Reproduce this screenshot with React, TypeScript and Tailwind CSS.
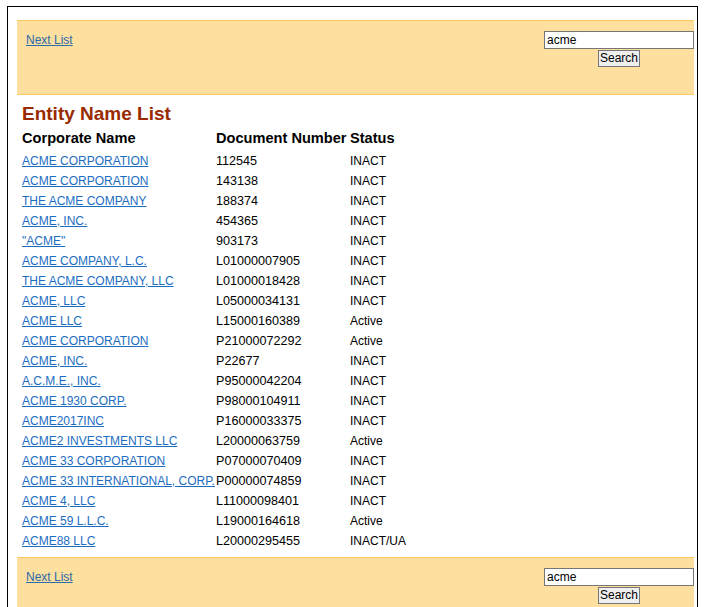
const entities = [
  { name: "ACME CORPORATION", doc: "112545", status: "INACT" },
  { name: "ACME CORPORATION", doc: "143138", status: "INACT" },
  { name: "THE ACME COMPANY", doc: "188374", status: "INACT" },
  { name: "ACME, INC.", doc: "454365", status: "INACT" },
  { name: '"ACME"', doc: "903173", status: "INACT" },
  { name: "ACME COMPANY, L.C.", doc: "L01000007905", status: "INACT" },
  { name: "THE ACME COMPANY, LLC", doc: "L01000018428", status: "INACT" },
  { name: "ACME, LLC", doc: "L05000034131", status: "INACT" },
  { name: "ACME LLC", doc: "L15000160389", status: "Active" },
  { name: "ACME CORPORATION", doc: "P21000072292", status: "Active" },
  { name: "ACME, INC.", doc: "P22677", status: "INACT" },
  { name: "A.C.M.E., INC.", doc: "P95000042204", status: "INACT" },
  { name: "ACME 1930 CORP.", doc: "P98000104911", status: "INACT" },
  { name: "ACME2017INC", doc: "P16000033375", status: "INACT" },
  { name: "ACME2 INVESTMENTS LLC", doc: "L20000063759", status: "Active" },
  { name: "ACME 33 CORPORATION", doc: "P07000070409", status: "INACT" },
  { name: "ACME 33 INTERNATIONAL, CORP.", doc: "P00000074859", status: "INACT" },
  { name: "ACME 4, LLC", doc: "L11000098401", status: "INACT" },
  { name: "ACME 59 L.L.C.", doc: "L19000164618", status: "Active" },
  { name: "ACME88 LLC", doc: "L20000295455", status: "INACT/UA" },
];

function Navigation() {
  return (
    <div className="ml-[9px] mr-[3px] flex h-[75px] justify-between border-y border-[#fcc862] bg-[#fddfa0] pt-[10px]">
      <a href="#" className="ml-[9px] mt-[2px] h-[14px] text-[12px] leading-[14px] text-[#2c6aa8] underline">
        Next List
      </a>
      <form className="flex w-[150px] flex-col items-center gap-[1px]" onSubmit={(e) => e.preventDefault()}>
        <input
          type="text"
          defaultValue="acme"
          className="h-[18px] w-[150px] border border-[#767676] bg-white px-[2px] text-[12px] leading-[16px] text-black outline-none"
        />
        <button
          type="submit"
          className="h-[17px] w-[42px] border border-[#767676] bg-[#efefef] text-[12px] leading-[15px] text-black"
        >
          Search
        </button>
      </form>
    </div>
  );
}

export default function App() {
  return (
    <div className="bg-white pt-[6px] pl-[7px]" style={{ fontFamily: '"Liberation Sans", Arial, sans-serif' }}>
      <div className="h-[620px] w-[691px] border border-black pt-[13px]">
        <Navigation />

        <h2 className="ml-[14px] mt-[6px] h-[25px] text-[19px] font-bold leading-[25px] text-[#992b00]">
          Entity Name List
        </h2>

        <div className="ml-[14px] mt-[1px]">
          <div className="grid h-[24px] grid-cols-[194px_134px_auto] items-center text-[14.6px] font-bold text-black">
            <div>Corporate Name</div>
            <div className="whitespace-nowrap">Document Number</div>
            <div>Status</div>
          </div>
          {entities.map((entity, i) => (
            <div key={i} className="grid h-[20px] grid-cols-[194px_134px_auto] items-center text-[12px] text-black">
              <a href="#" className="whitespace-nowrap text-[#1c6dc1] underline">
                {entity.name}
              </a>
              <div className="text-[12.6px]">{entity.doc}</div>
              <div>{entity.status}</div>
            </div>
          ))}
        </div>

        <div className="mt-[6px]">
          <Navigation />
        </div>
      </div>
    </div>
  );
}
